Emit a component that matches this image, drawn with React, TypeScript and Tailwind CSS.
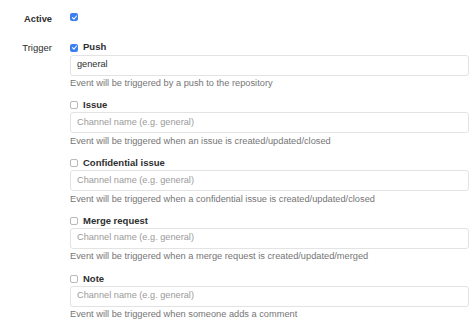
const events = [
  {
    name: "Push",
    checked: true,
    value: "general",
    help: "Event will be triggered by a push to the repository",
  },
  {
    name: "Issue",
    checked: false,
    value: "",
    help: "Event will be triggered when an issue is created/updated/closed",
  },
  {
    name: "Confidential issue",
    checked: false,
    value: "",
    help: "Event will be triggered when a confidential issue is created/updated/closed",
  },
  {
    name: "Merge request",
    checked: false,
    value: "",
    help: "Event will be triggered when a merge request is created/updated/merged",
  },
  {
    name: "Note",
    checked: false,
    value: "",
    help: "Event will be triggered when someone adds a comment",
  },
];

function Checkbox({ checked }: { checked: boolean }) {
  if (checked) {
    return (
      <span className="flex h-[8px] w-[8px] items-center justify-center rounded-[2px] bg-[#3b7ff2]">
        <svg viewBox="0 0 8 8" className="h-[7px] w-[7px]">
          <path d="M1.6 4.2 L3.3 5.8 L6.4 2.3" fill="none" stroke="white" strokeWidth="1.2" strokeLinecap="round" strokeLinejoin="round" />
        </svg>
      </span>
    );
  }
  return <span className="block h-[8px] w-[8px] rounded-[2px] border border-[#b9b9b9] bg-white" />;
}

export default function App() {
  return (
    <div
      className="h-[327px] w-[474px] overflow-hidden bg-white text-[#2e2e2e]"
      style={{ fontFamily: '"Liberation Sans", Arial, sans-serif' }}
    >
      <div className="flex pt-[12px]">
        <div className="w-[52px] text-right text-[9.3px] font-bold leading-[14px]">Active</div>
        <div className="ml-[18px] flex h-[10px] items-center">
          <Checkbox checked />
        </div>
      </div>

      <div className="mt-[14.5px] flex">
        <div className="w-[52px] text-right text-[9.5px] leading-[14px]">Trigger</div>
        <div className="ml-[18px] mr-[5px] flex flex-1 flex-col">
          {events.map((ev) => (
            <div key={ev.name} className="mb-[9.3px] flex flex-col">
              <div className="flex h-[14px] items-center gap-[5px]">
                <Checkbox checked={ev.checked} />
                <span className="text-[9.5px] font-bold">{ev.name}</span>
              </div>
              <div className="flex h-[21px] items-center rounded-[3px] border border-[#e3e3e3] px-[6px] text-[9.2px]">
                {ev.value ? (
                  <span className="text-[#2e2e2e]">{ev.value}</span>
                ) : (
                  <span className="text-[#9a9a9a]">Channel name (e.g. general)</span>
                )}
              </div>
              <div className="mt-[1.5px] text-[9.25px] leading-[12px] text-[#757575]">{ev.help}</div>
            </div>
          ))}
        </div>
      </div>
    </div>
  );
}
